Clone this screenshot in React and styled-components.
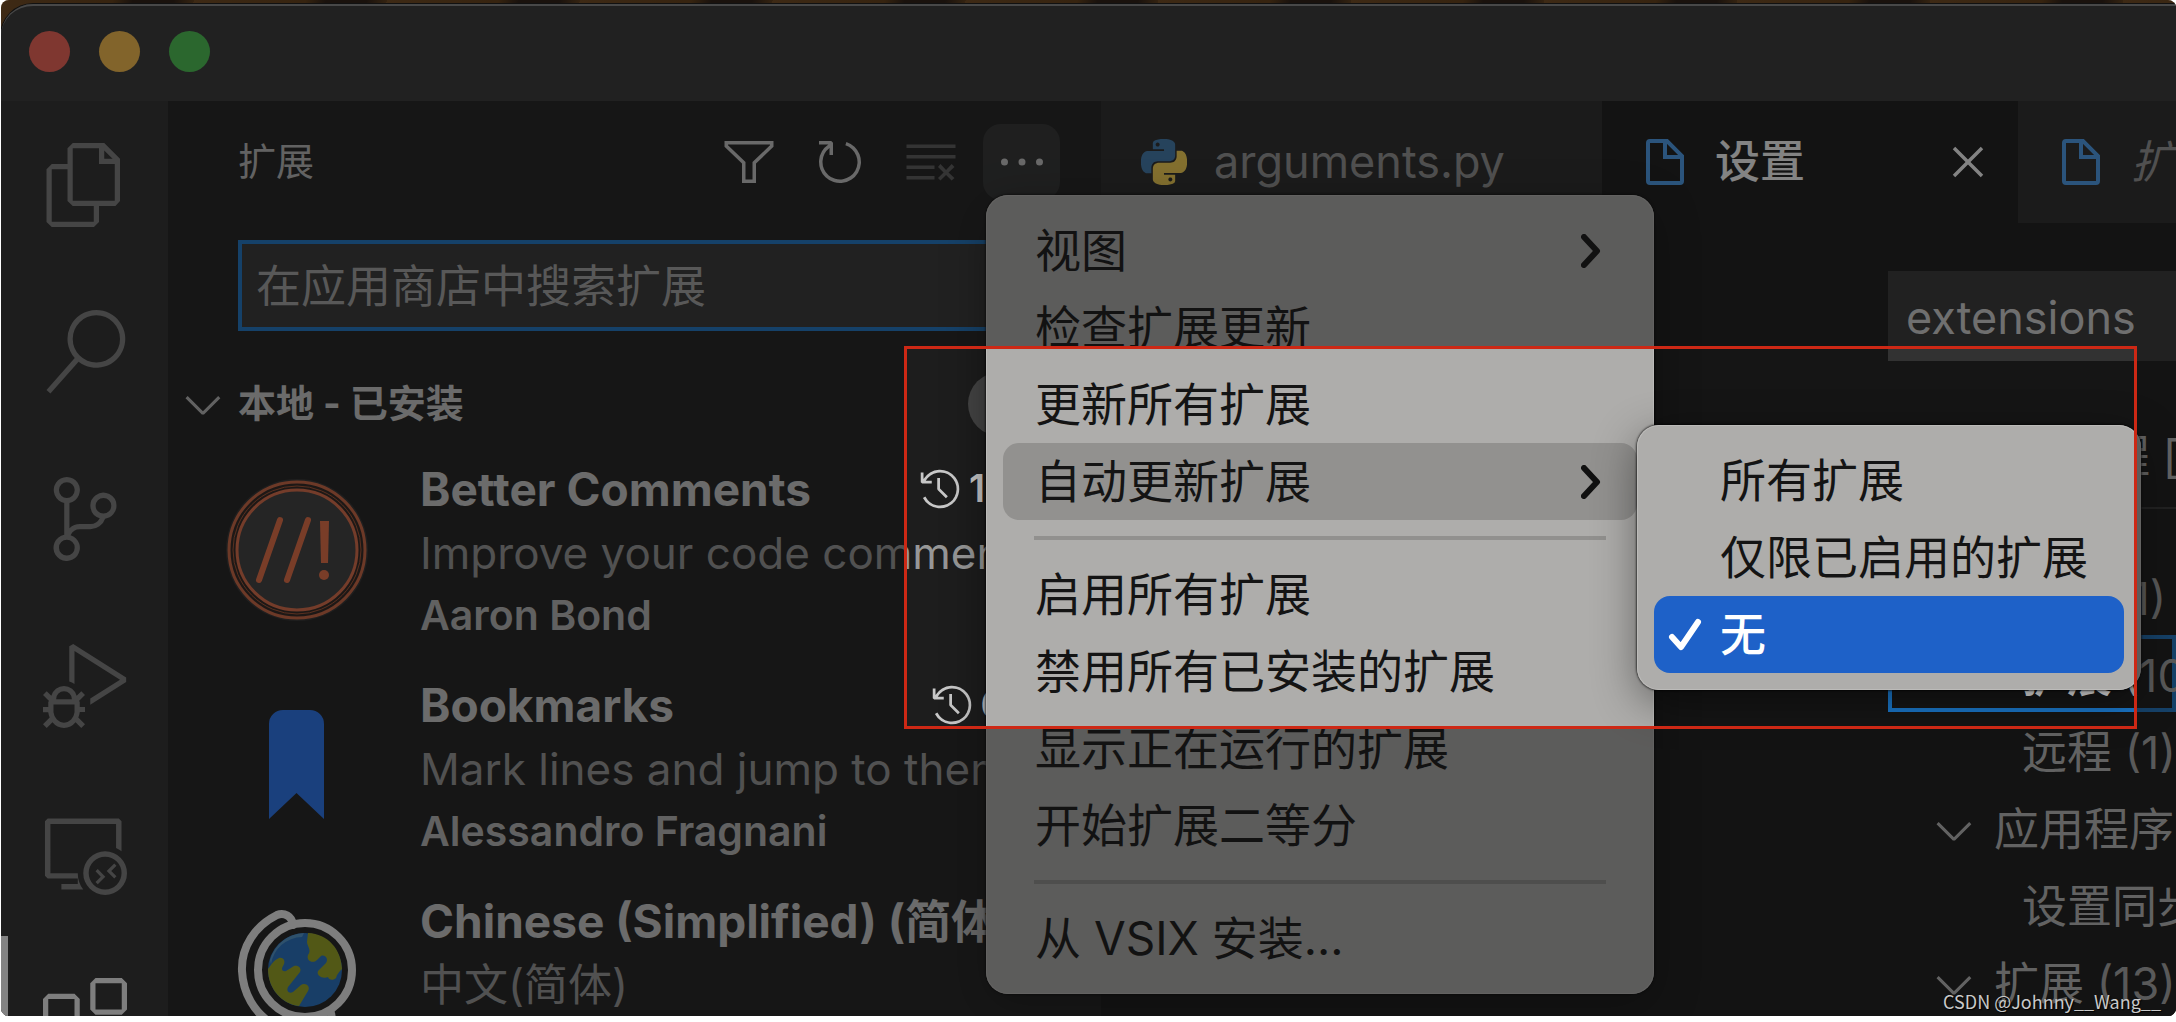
import styled, { createGlobalStyle } from "styled-components";
import {
  VscChevronDown,
  VscClearAll,
  VscClose,
  VscDebugAlt,
  VscEllipsis,
  VscExtensions,
  VscFiles,
  VscFilter,
  VscHistory,
  VscRefresh,
  VscRemoteExplorer,
  VscSearch,
  VscSourceControl,
} from "react-icons/vsc";

const GlobalStyle = createGlobalStyle`
  * {
    box-sizing: border-box;
  }

  body {
    margin: 0;
    background: #fff;
    font-family: Inter, "Noto Sans CJK SC", sans-serif;
    font-size: 45px;
    line-height: 1.2;
    color: #bbb;
  }

  button,
  input {
    font: inherit;
    color: inherit;
    border: 0;
    padding: 0;
    background: none;
  }
`;

const Page = styled.div`
  height: 100vh;
  padding: 0 0 6px 1px;
`;

const Frame = styled.div`
  position: relative;
  height: 100%;
  padding-top: 4px;
  overflow: hidden;
  border-radius: 8px;
  background: repeating-linear-gradient(
    100deg,
    #704519 0,
    #60390f 110px,
    #24140a 130px,
    #24140a 170px,
    #5c3812 190px
  );
`;

const Window = styled.div`
  display: flex;
  flex-direction: column;
  height: 100%;
  border-radius: 32px 0 0 0;
  background: #343434;
  box-shadow: 0 0 0 1px #111;
`;

const TitleBar = styled.div`
  flex: none;
  display: flex;
  align-items: center;
  gap: 29px;
  height: 97px;
  padding: 0 0 4px 28px;
  border-top: 2px solid #858585;
  border-radius: 32px 0 0 0;
`;

const Light = styled.button`
  width: 41px;
  height: 41px;
  border-radius: 50%;
  background: ${({ $color }) => $color};
`;

const Workbench = styled.div`
  flex: 1;
  display: flex;
  min-height: 0;
`;

const ActivityBar = styled.nav`
  flex: none;
  width: 167px;
  background: #2a2a2a;
`;

const ActivityButton = styled.button`
  display: flex;
  align-items: center;
  justify-content: center;
  width: 100%;
  height: 167px;
  border-left: 7px solid ${({ $active }) => ($active ? "#fff" : "transparent")};
  padding-right: 7px;
  color: ${({ $active }) => ($active ? "#f4f4f4" : "#7d7d7d")};
`;

const SideBar = styled.aside`
  flex: none;
  width: 933px;
  background: #1d1d1d;
`;

const SideHeader = styled.header`
  display: flex;
  align-items: center;
  justify-content: space-between;
  height: 122px;
  padding: 0 41px 0 70px;
`;

const SideTitle = styled.h2`
  margin: 0;
  font-size: 38px;
  font-weight: 400;
`;

const Actions = styled.div`
  display: flex;
  gap: 14px;
`;

const ActionButton = styled.button`
  display: flex;
  align-items: center;
  justify-content: center;
  width: 77px;
  height: 76px;
  border-radius: 18px;
  color: ${({ disabled }) => (disabled ? "#5a5a5a" : "#c8c8c8")};
  background: ${({ $open }) => ($open ? "#2e2f2f" : "none")};
`;

const MenuAnchor = styled.div`
  position: relative;
  z-index: 2;
`;

const SearchArea = styled.div`
  padding: 17px 41px 34px 70px;
`;

const SearchInput = styled.input`
  display: block;
  width: 100%;
  height: 91px;
  padding: 2px 14px 0;
  border: 4px solid #1a76c8;
  background: #323232;
  outline: none;

  &::placeholder {
    color: #a6a6a6;
    opacity: 1;
  }
`;

const SectionHeader = styled.div`
  display: flex;
  align-items: center;
  gap: 7px;
  height: 78px;
  padding: 0 69px 0 7px;
`;

const SectionTitle = styled.h3`
  flex: 1;
  margin: 0;
  font-size: 38px;
  font-weight: 700;
  color: #ccc;
`;

const Badge = styled.span`
  width: 64px;
  height: 64px;
  border-radius: 32px;
  background: #454545;
`;

const ExtensionRow = styled.article`
  display: grid;
  grid-template-columns: 149px minmax(0, 1fr);
  column-gap: 49px;
  align-items: center;
  height: 216px;
  padding: 0 41px 0 54px;
`;

const ExtensionHead = styled.div`
  display: flex;
  align-items: center;
  height: 64px;
`;

const ExtensionName = styled.h4`
  flex: 1;
  margin: 0;
  overflow: hidden;
  white-space: nowrap;
  font-size: 46px;
  line-height: 64px;
  font-weight: 700;
  color: #ccc;
`;

const Activation = styled.span`
  display: flex;
  align-items: center;
  gap: 7px;
  font-size: 38px;
  font-weight: 600;
  color: #c8c8c8;
`;

const Description = styled.p`
  margin: 0;
  overflow: hidden;
  white-space: nowrap;
  font-size: 44px;
  line-height: 64px;
  color: #979797;
`;

const Author = styled.p`
  margin: 0;
  font-size: 41px;
  line-height: 60px;
  font-weight: 600;
  color: #b8b8b8;
`;

const Editor = styled.main`
  flex: 1;
  min-width: 0;
  overflow: hidden;
  background: #151515;
`;

const TabBar = styled.div`
  display: flex;
  height: 122px;
`;

const Tab = styled.div`
  flex: none;
  display: flex;
  align-items: center;
  gap: 27px;
  min-width: ${({ $wide }) => ($wide ? 501 : 416)}px;
  padding: 0 22px 0 40px;
  white-space: nowrap;
  color: ${({ $active }) => ($active ? "#fff" : "#949494")};
  font-weight: ${({ $active }) => ($active ? 500 : 400)};
  font-style: ${({ $preview }) => ($preview ? "italic" : "normal")};
  background: ${({ $active }) => ($active ? "#151515" : "#262626")};
`;

const CloseButton = styled.button`
  display: flex;
  margin-left: auto;
`;

const Settings = styled.div`
  padding: 48px 0 0 787px;
`;

const SettingsInput = styled.input`
  display: block;
  width: 100%;
  height: 90px;
  padding: 2px 18px 0;
  background: #323232;
  color: #d6d6d6;
  outline: none;
`;

const ScopeTabs = styled.div`
  display: flex;
  align-items: center;
  gap: 64px;
  height: 107px;
  margin: 41px 0 49px;
  padding: 4px 0 0 18px;
  border-bottom: 2px solid #333;
  white-space: nowrap;
`;

const TocRow = styled.div`
  display: flex;
  align-items: center;
  gap: 12px;
  height: 77px;
  padding-top: 4px;
  padding-left: ${({ $leaf }) => ($leaf ? 134 : 38)}px;
  white-space: nowrap;
  font-weight: ${({ $selected }) => ($selected ? 700 : 400)};
  color: ${({ $selected }) => ($selected ? "#ddd" : "#bbb")};
  box-shadow: ${({ $selected }) => ($selected ? "inset 0 0 0 4px #1a76c8" : "none")};
`;

const Count = styled.span`
  font-weight: 400;
  color: #a8a8a8;
`;

const MenuPanel = styled.div`
  position: absolute;
  padding: 17px;
  border-radius: 22px;
  background: #aeadab;
  box-shadow:
    inset 0 0 0 1px #bcbbb9,
    0 0 2px 1px rgba(0, 0, 0, 0.6),
    0 12px 44px rgba(0, 0, 0, 0.42);
`;

const MainMenu = styled(MenuPanel)`
  top: 71px;
  left: 3px;
  width: 668px;
`;

const SubMenu = styled(MenuPanel)`
  top: -18px;
  left: 100%;
  width: 504px;
`;

const MenuCell = styled.div`
  position: relative;
`;

const MenuItem = styled.button`
  display: flex;
  align-items: center;
  justify-content: space-between;
  width: 100%;
  height: 77px;
  padding: 0 36px 0 32px;
  border-radius: 16px;
  font-size: 46px;
  white-space: nowrap;
  color: #141414;
  background: ${({ $open }) => ($open ? "#92918f" : "none")};
`;

const SubMenuItem = styled(MenuItem)`
  justify-content: flex-start;
  gap: 18px;
  padding: 0 14px;
  color: ${({ $checked }) => ($checked ? "#fff" : "#141414")};
  font-weight: ${({ $checked }) => ($checked ? 500 : 400)};
  background: ${({ $checked }) => ($checked ? "#1e61c8" : "none")};
`;

const CheckSlot = styled.span`
  display: flex;
  width: 34px;
`;

const Separator = styled.hr`
  height: 4px;
  margin: 16px 31px;
  border: 0;
  background: #91908e;
`;

/* The spread shadow dims everything outside of the outline */
const Highlight = styled.div`
  position: absolute;
  z-index: 5;
  top: 346px;
  left: 903px;
  width: 1233px;
  height: 383px;
  border: 3px solid #cd2815;
  box-shadow: 0 0 0 3000px rgba(17, 17, 17, 0.52);
  pointer-events: none;
`;

const Watermark = styled.span`
  position: absolute;
  z-index: 6;
  right: 15px;
  bottom: 1px;
  font-family: "Noto Sans CJK SC", sans-serif;
  font-size: 18px;
  line-height: 28px;
  color: #c9c9c9;
  text-shadow: 1px 1px 1px #000;
`;

const PythonIcon = () => (
  <svg width="46" height="46" viewBox="0 0 24 24">
    <path
      fill="#3d79ae"
      d="M14.25.18l.9.2.73.26.59.3.45.32.34.34.25.34.16.33.1.3.04.26.02.2-.01.13V8.5l-.05.63-.13.55-.21.46-.26.38-.3.31-.33.25-.35.19-.35.14-.33.1-.3.07-.26.04-.21.02H8.77l-.69.05-.59.14-.5.22-.41.27-.33.32-.27.35-.2.36-.15.37-.1.35-.07.32-.04.27-.02.21v3.06H3.17l-.21-.03-.28-.07-.32-.12-.35-.18-.36-.26-.36-.36-.35-.46-.32-.59-.28-.73-.21-.88-.14-1.05-.05-1.23.06-1.22.16-1.04.24-.87.32-.71.36-.57.4-.44.42-.33.42-.24.4-.16.36-.1.32-.05.24-.01h.16l.06.01h8.16v-.83H6.18l-.01-2.75-.02-.37.05-.34.11-.31.17-.28.25-.26.31-.23.38-.2.44-.18.51-.15.58-.12.64-.1.71-.06.77-.04.84-.02 1.27.05zm-6.3 1.98l-.23.33-.08.41.08.41.23.34.33.22.41.09.41-.09.33-.22.23-.34.08-.41-.08-.41-.23-.33-.33-.22-.41-.09-.41.09z"
    />
    <path
      fill="#ffd750"
      d="M21.04 6.11l.28.06.32.12.35.18.36.27.36.35.35.47.32.59.28.73.21.88.14 1.04.05 1.23-.06 1.23-.16 1.04-.24.86-.32.71-.36.57-.4.45-.42.33-.42.24-.4.16-.36.09-.32.05-.24.02-.16-.01h-8.22v.82h5.84l.01 2.76.02.36-.05.34-.11.31-.17.29-.25.25-.31.24-.38.2-.44.17-.51.15-.58.13-.64.09-.71.07-.77.04-.84.01-1.27-.04-1.07-.14-.9-.2-.73-.25-.59-.3-.45-.33-.34-.34-.25-.34-.16-.33-.1-.3-.04-.25-.02-.2.01-.13v-5.34l.05-.64.13-.54.21-.46.26-.38.3-.32.33-.24.35-.2.35-.14.33-.1.3-.06.26-.04.21-.02.13-.01h5.84l.69-.05.59-.14.5-.21.41-.28.33-.32.27-.35.2-.36.15-.36.1-.35.07-.32.04-.28.02-.21V6.07h2.09l.14.01zm-6.47 14.25l-.23.33-.08.41.08.41.23.33.33.23.41.08.41-.08.33-.23.23-.33.08-.41-.08-.41-.23-.33-.33-.23-.41-.08-.41.08z"
    />
  </svg>
);

const FileIcon = () => (
  <svg width="46" height="46" viewBox="0 0 46 46" fill="none">
    <path
      d="M8 2h17l15 15v25a2 2 0 0 1-2 2H8a2 2 0 0 1-2-2V4a2 2 0 0 1 2-2zM23 2v16h17"
      stroke="#479ef0"
      strokeWidth="4"
    />
  </svg>
);

const CommentsIcon = () => (
  <svg width="149" height="149" viewBox="0 0 149 149" fill="none">
    <circle cx="75" cy="73" r="71" fill="#3a3a3a" opacity="0.6" />
    <circle cx="75" cy="73" r="68" fill="#2a201d" stroke="#cf6440" strokeWidth="3" />
    <circle cx="75" cy="73" r="64" stroke="#a9522f" strokeWidth="1" />
    <circle cx="75" cy="73" r="60" fill="#3c3c3c" stroke="#e06c45" strokeWidth="3" />
    <path
      d="M58 43 37 103M86 43 65 103"
      stroke="#eb6d42"
      strokeWidth="6"
      strokeLinecap="round"
    />
    <path d="M98 44h9l-1 42h-7z" fill="#eb6d42" />
    <circle cx="102" cy="98" r="5" fill="#eb6d42" />
  </svg>
);

const BookmarkIcon = () => (
  <svg width="149" height="149" viewBox="0 0 149 149">
    <path
      d="M47 31a14 14 0 0 1 14-14h27a14 14 0 0 1 14 14v95L74.500 100 47 126z"
      fill="#2573f2"
    />
  </svg>
);

const GlobeIcon = () => (
  <svg width="149" height="149" viewBox="0 0 149 149" fill="none">
    <path
      d="M71 16C70 7 62 3 55 6 33 17 19 38 20 62c1 22 12 42 32 54h46c10 0 14-6 10-14"
      stroke="#f4f4f4"
      strokeWidth="8"
      strokeLinecap="round"
    />
    <circle cx="83" cy="61" r="47" stroke="#f4f4f4" strokeWidth="8" />
    <circle cx="83" cy="61" r="37" fill="#2170c4" />
    <path d="M48 51a37 37 0 0 1 34-27l-2 4a32 32 0 0 0-31 27z" fill="#4f97cf" />
    <path
      d="M86 24c20 1 33 16 34 36-3 3-5 5-6 9-3 3-7 2-8-1-5 2-12-1-10-6l8-8c3-4-1-9-5-7l-4 4c-4 4-11 1-9-5 4-5-1-9-1-13z"
      fill="#9aa61c"
    />
    <path
      d="M46 60c3-4 6-9 11-11 5-1 7 4 4 8-2 3-1 6 3 5l8-5c4-1 8 2 6 6L66 78c-2 4 1 7 5 5l8-7c4-3 10 1 7 6l-9 15c-17-2-31-17-31-37z"
      fill="#9aa61c"
    />
  </svg>
);

const MenuArrow = () => (
  <svg width="20" height="34" viewBox="0 0 20 34" fill="none">
    <path
      d="M3 3 16 17 3 31"
      stroke="#111"
      strokeWidth="6"
      strokeLinecap="round"
      strokeLinejoin="round"
    />
  </svg>
);

const CheckMark = () => (
  <svg width="34" height="34" viewBox="0 0 34 34" fill="none">
    <path
      d="M4 19 13 29 30 4"
      stroke="#fff"
      strokeWidth="6"
      strokeLinecap="round"
      strokeLinejoin="round"
    />
  </svg>
);

const activities = [
  { label: "资源管理器", Icon: VscFiles },
  { label: "搜索", Icon: VscSearch },
  { label: "源代码管理", Icon: VscSourceControl },
  { label: "运行和调试", Icon: VscDebugAlt },
  { label: "远程资源管理器", Icon: VscRemoteExplorer },
  { label: "扩展", Icon: VscExtensions, active: true },
];

const extensions = [
  {
    name: "Better Comments",
    description: "Improve your code commenting",
    author: "Aaron Bond",
    time: "17ms",
    Icon: CommentsIcon,
  },
  {
    name: "Bookmarks",
    description: "Mark lines and jump to them",
    author: "Alessandro Fragnani",
    time: "6ms",
    Icon: BookmarkIcon,
  },
  {
    name: "Chinese (Simplified) (简体",
    description: "中文(简体)",
    Icon: GlobeIcon,
  },
];

const toc = [
  { label: "功能", count: 11 },
  { label: "扩展", count: 10, leaf: true, selected: true },
  { label: "远程", count: 1, leaf: true },
  { label: "应用程序" },
  { label: "设置同步", leaf: true },
  { label: "扩展", count: 13 },
];

function ExtensionsMenu() {
  return (
    <MainMenu role="menu">
      <MenuItem role="menuitem">
        视图
        <MenuArrow />
      </MenuItem>
      <MenuItem role="menuitem">检查扩展更新</MenuItem>
      <MenuItem role="menuitem">更新所有扩展</MenuItem>
      <MenuCell>
        <MenuItem role="menuitem" aria-expanded="true" $open>
          自动更新扩展
          <MenuArrow />
        </MenuItem>
        <SubMenu role="menu">
          <SubMenuItem role="menuitemradio" aria-checked="false">
            <CheckSlot />
            所有扩展
          </SubMenuItem>
          <SubMenuItem role="menuitemradio" aria-checked="false">
            <CheckSlot />
            仅限已启用的扩展
          </SubMenuItem>
          <SubMenuItem role="menuitemradio" aria-checked="true" $checked>
            <CheckSlot>
              <CheckMark />
            </CheckSlot>
            无
          </SubMenuItem>
        </SubMenu>
      </MenuCell>
      <Separator />
      <MenuItem role="menuitem">启用所有扩展</MenuItem>
      <MenuItem role="menuitem">禁用所有已安装的扩展</MenuItem>
      <MenuItem role="menuitem">显示正在运行的扩展</MenuItem>
      <MenuItem role="menuitem">开始扩展二等分</MenuItem>
      <Separator />
      <MenuItem role="menuitem">从 VSIX 安装...</MenuItem>
    </MainMenu>
  );
}

function ExtensionsSideBar() {
  return (
    <SideBar>
      <SideHeader>
        <SideTitle>扩展</SideTitle>
        <Actions>
          <ActionButton aria-label="筛选器">
            <VscFilter size={56} />
          </ActionButton>
          <ActionButton aria-label="刷新">
            <VscRefresh size={56} />
          </ActionButton>
          <ActionButton aria-label="清除" disabled>
            <VscClearAll size={56} />
          </ActionButton>
          <MenuAnchor>
            <ActionButton aria-label="更多操作" $open>
              <VscEllipsis size={56} />
            </ActionButton>
            <ExtensionsMenu />
          </MenuAnchor>
        </Actions>
      </SideHeader>
      <SearchArea>
        <SearchInput
          type="text"
          aria-label="搜索扩展"
          placeholder="在应用商店中搜索扩展"
        />
      </SearchArea>
      <SectionHeader>
        <VscChevronDown size={56} />
        <SectionTitle>本地 - 已安装</SectionTitle>
        <Badge />
      </SectionHeader>
      {extensions.map(({ name, description, author, time, Icon }) => (
        <ExtensionRow key={name}>
          <Icon />
          <div>
            <ExtensionHead>
              <ExtensionName>{name}</ExtensionName>
              {time && (
                <Activation>
                  <VscHistory size={44} />
                  {time}
                </Activation>
              )}
            </ExtensionHead>
            <Description>{description}</Description>
            <Author>{author || "\u00a0"}</Author>
          </div>
        </ExtensionRow>
      ))}
    </SideBar>
  );
}

function SettingsEditor() {
  return (
    <Editor>
      <TabBar>
        <Tab $wide>
          <PythonIcon />
          arguments.py
        </Tab>
        <Tab $active>
          <FileIcon />
          设置
          <CloseButton aria-label="关闭">
            <VscClose size={56} />
          </CloseButton>
        </Tab>
        <Tab $preview>
          <FileIcon />
          扩展
        </Tab>
      </TabBar>
      <Settings>
        <SettingsInput type="text" aria-label="搜索设置" defaultValue="extensions" />
        <ScopeTabs>
          <span>用户</span>
          <span>远程 [SSH]</span>
        </ScopeTabs>
        {toc.map(({ label, count, leaf, selected }) => (
          <TocRow key={label + count} $leaf={leaf} $selected={selected}>
            {!leaf && <VscChevronDown size={56} />}
            <span>
              {label} {count && <Count>({count})</Count>}
            </span>
          </TocRow>
        ))}
      </Settings>
    </Editor>
  );
}

export default function App() {
  return (
    <Page>
      <GlobalStyle />
      <Frame>
        <Window>
          <TitleBar>
            <Light $color="#f66053" aria-label="关闭窗口" />
            <Light $color="#fcbe47" aria-label="最小化" />
            <Light $color="#47c44f" aria-label="缩放" />
          </TitleBar>
          <Workbench>
            <ActivityBar>
              {activities.map(({ label, Icon, active }) => (
                <ActivityButton key={label} aria-label={label} $active={active}>
                  <Icon size={84} />
                </ActivityButton>
              ))}
            </ActivityBar>
            <ExtensionsSideBar />
            <SettingsEditor />
          </Workbench>
        </Window>
        <Highlight />
        <Watermark>CSDN @Johnny__Wang__</Watermark>
      </Frame>
    </Page>
  );
}
